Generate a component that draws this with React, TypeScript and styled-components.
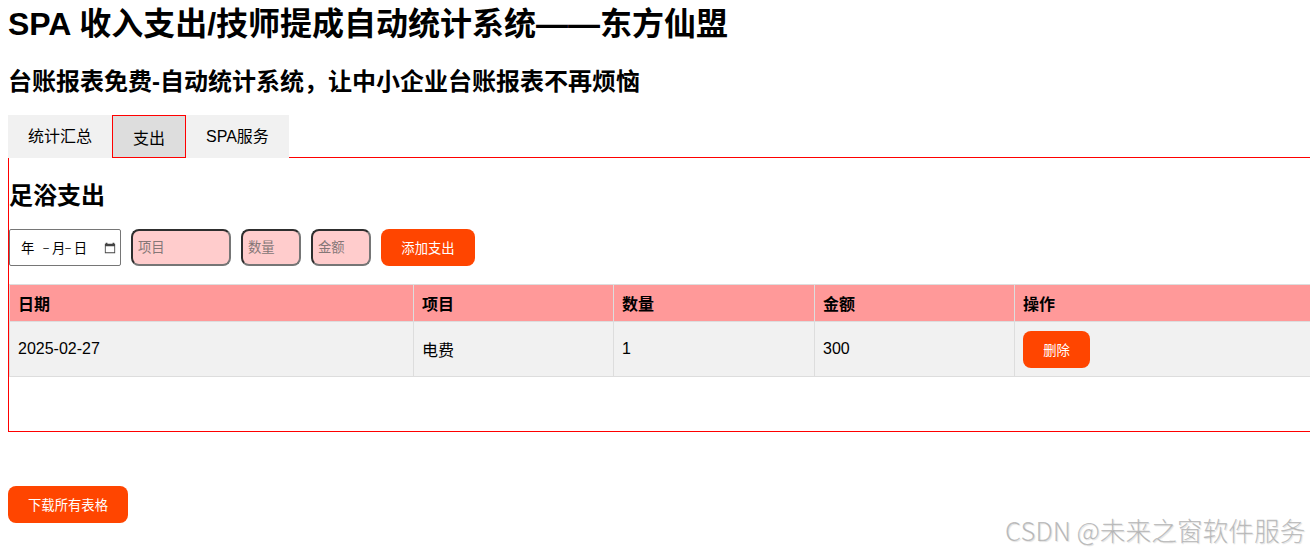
import React from "react";
import styled, { createGlobalStyle } from "styled-components";

const CJK = `"Liberation Sans", "Noto Sans CJK SC", sans-serif`;

const GlobalStyle = createGlobalStyle`
  html, body {
    margin: 0;
    background: #fff;
  }
  body {
    padding: 0 0 0 8px;
    font-family: ${CJK};
    font-size: 16px;
    color: #000;
  }
`;

const Title = styled.h1`
  margin: 0;
  padding-top: 6px;
  font-size: 32px;
  line-height: 37px;
  font-weight: bold;
`;

const Subtitle = styled.h2`
  margin: 25px 0 0;
  font-size: 24px;
  line-height: 28px;
  font-weight: bold;
`;

const Tabs = styled.div`
  display: flex;
  margin-top: 19px;
`;

const Tab = styled.div<{ $active?: boolean }>`
  box-sizing: border-box;
  height: 43px;
  padding: 0 20px ${({ $active }) => ($active ? 0 : 3)}px;
  display: flex;
  align-items: center;
  font-size: 16px;
  background: ${({ $active }) => ($active ? "#ddd" : "#f1f1f1")};
  border: ${({ $active }) => ($active ? "1px solid #f00" : "none")};
`;

const Panel = styled.div`
  box-sizing: border-box;
  height: 275px;
  margin-top: -1px;
  border: 1px solid #f00;
  border-right: none;
`;

const PanelTitle = styled.h3`
  margin: 24px 0 0;
  font-size: 24px;
  line-height: 28px;
  font-weight: bold;
`;

const Form = styled.div`
  display: flex;
  align-items: center;
  gap: 10px;
  margin-top: 19px;
  height: 37px;
`;

const DateField = styled.div`
  box-sizing: border-box;
  width: 112px;
  height: 37px;
  padding: 0 4px 0 11px;
  display: flex;
  align-items: center;
  border: 1px solid #767676;
  border-radius: 2px;
  background: #fff;
  font-size: 13.33px;
`;

const DatePart = styled.span<{ $gap?: number }>`
  margin-left: ${({ $gap }) => $gap ?? 0}px;
`;

const DateDash = styled.span<{ $gap?: number }>`
  margin-left: ${({ $gap }) => $gap ?? 0}px;
  font-size: 10px;
`;

const CalendarIcon = styled.svg`
  width: 12px;
  height: 12px;
  margin-left: auto;
`;

const TextInput = styled.input<{ $w: number }>`
  box-sizing: border-box;
  width: ${({ $w }) => $w}px;
  height: 37px;
  padding: 0 5px;
  border: 2px solid;
  border-color: #2e2e2e #767676 #767676 #2e2e2e;
  border-radius: 8px;
  background: #ffcccc;
  font-family: ${CJK};
  font-size: 13.33px;
  &::placeholder {
    color: #857777;
    opacity: 1;
  }
`;

const ActionButton = styled.button<{ $w: number; $h: number }>`
  width: ${({ $w }) => $w}px;
  height: ${({ $h }) => $h}px;
  padding: 0;
  border: none;
  border-radius: 8px;
  background: #ff4500;
  color: #fff;
  font-family: ${CJK};
  font-size: 13.33px;
`;

const Table = styled.table`
  width: 100%;
  margin-top: 18px;
  border-collapse: collapse;
  table-layout: fixed;
`;

const Th = styled.th<{ $w?: number }>`
  box-sizing: border-box;
  width: ${({ $w }) => ($w ? `${$w}px` : "auto")};
  height: 37px;
  padding: 0 8px;
  text-align: left;
  background: #ff9999;
  border: 1px solid #ddd;
  font-size: 16px;
  font-weight: bold;
  &:last-child {
    border-right: none;
  }
`;

const Td = styled.td`
  box-sizing: border-box;
  height: 55px;
  padding: 0 8px;
  background: #f1f1f1;
  border: 1px solid #ddd;
  font-size: 16px;
  &:last-child {
    border-right: none;
  }
`;

const Footer = styled.div`
  margin-top: 54px;
`;

const Watermark = styled.div`
  position: absolute;
  left: 1005px;
  top: 515px;
  font-family: "Noto Sans CJK SC", "Noto Sans", sans-serif;
  font-size: 25.7px;
  font-weight: 300;
  line-height: 30px;
  color: rgba(150, 150, 150, 0.6);
  text-shadow: 1px 1px 1px rgba(0, 0, 0, 0.12);
  white-space: nowrap;
`;

export default function App() {
  return (
    <>
      <GlobalStyle />
      <Title>SPA 收入支出/技师提成自动统计系统——东方仙盟</Title>
      <Subtitle>台账报表免费-自动统计系统，让中小企业台账报表不再烦恼</Subtitle>
      <Tabs>
        <Tab>统计汇总</Tab>
        <Tab $active>支出</Tab>
        <Tab>SPA服务</Tab>
      </Tabs>
      <Panel>
        <PanelTitle>足浴支出</PanelTitle>
        <Form>
          <DateField>
            <DatePart>年</DatePart>
            <DateDash $gap={9}>–</DateDash>
            <DatePart $gap={3}>月</DatePart>
            <DateDash>–</DateDash>
            <DatePart $gap={3}>日</DatePart>
            <CalendarIcon viewBox="0 0 14 14">
              <path
                fill="#444"
                d="M2 1h2v1h6V1h2v1h1v11H1V2h1V1zm0 4v7h10V5H2z"
              />
            </CalendarIcon>
          </DateField>
          <TextInput $w={100} placeholder="项目" />
          <TextInput $w={60} placeholder="数量" />
          <TextInput $w={60} placeholder="金额" />
          <ActionButton $w={94} $h={37}>添加支出</ActionButton>
        </Form>
        <Table>
          <thead>
            <tr>
              <Th $w={404}>日期</Th>
              <Th $w={200}>项目</Th>
              <Th $w={201}>数量</Th>
              <Th $w={200}>金额</Th>
              <Th>操作</Th>
            </tr>
          </thead>
          <tbody>
            <tr>
              <Td>2025-02-27</Td>
              <Td>电费</Td>
              <Td>1</Td>
              <Td>300</Td>
              <Td>
                <ActionButton $w={67} $h={37}>删除</ActionButton>
              </Td>
            </tr>
          </tbody>
        </Table>
      </Panel>
      <Footer>
        <ActionButton $w={120} $h={37}>下载所有表格</ActionButton>
      </Footer>
      <Watermark>CSDN @未来之窗软件服务</Watermark>
    </>
  );
}
